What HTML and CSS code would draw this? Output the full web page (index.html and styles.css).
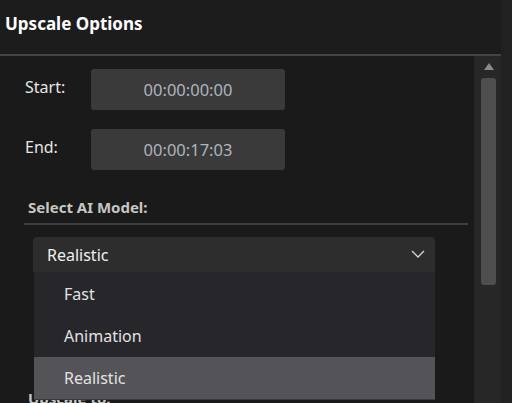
FILE: index.html
```html
<!DOCTYPE html>
<html>
<head>
<meta charset="utf-8">
<link rel="stylesheet" href="styles.css">
</head>
<body>
<div class="app">
  <div class="main">
    <header class="header"><h1 class="title">Upscale Options</h1></header>
    <div class="body">
      <div class="content">
        <div class="row">
          <span class="label">Start:</span>
          <div class="timebox">00:00:00:00</div>
        </div>
        <div class="row">
          <span class="label">End:</span>
          <div class="timebox">00:00:17:03</div>
        </div>
        <div class="section">Select AI Model:</div>
        <div class="select">
          <span>Realistic</span>
          <svg class="chev" width="14" height="8" viewBox="0 0 14 8"><path d="M1 1 L7 7 L13 1" fill="none" stroke="#d8d8d8" stroke-width="1.3"/></svg>
        </div>
        <div class="section next">Upscale to:</div>
        <ul class="popup">
          <li class="opt">Fast</li>
          <li class="opt">Animation</li>
          <li class="opt selected">Realistic</li>
        </ul>
      </div>
      <div class="scrollbar">
        <svg class="arrow" width="10" height="7" viewBox="0 0 10 7"><path d="M5 0 L10 7 L0 7 Z" fill="#8a8a8a"/></svg>
        <div class="thumb"></div>
      </div>
    </div>
  </div>
  <div class="strip"></div>
</div>
</body>
</html>
```

FILE: styles.css
```css
html, body {
  margin: 0;
  padding: 0;
  background: #1a1a1a;
  font-family: "Noto Sans", "Open Sans", sans-serif;
  overflow: hidden;
}
.app {
  display: flex;
  width: 512px;
  height: 403px;
}
.main {
  width: 501px;
  display: flex;
  flex-direction: column;
}
.strip {
  width: 11px;
  background: #212121;
}
.header {
  height: 54px;
  background: #1c1c1c;
  border-bottom: 2px solid #454545;
  box-sizing: content-box;
  display: flex;
  align-items: center;
}
.title {
  margin: 0 0 0 5px;
  font-size: 17px;
  font-weight: 700;
  color: #ffffff;
  position: relative;
  top: -4px;
}
.body {
  flex: 1;
  display: flex;
  min-height: 0;
}
.content {
  flex: 1;
  position: relative;
  padding: 13px 0 0 25px;
  overflow: hidden;
}
.row {
  display: flex;
  align-items: flex-start;
  margin-bottom: 19px;
}
.label {
  width: 66px;
  color: #e6e6e6;
  font-size: 16px;
  padding-top: 7px;
}
.timebox {
  width: 194px;
  height: 41px;
  background: #3a3a3a;
  border-radius: 3px;
  color: #aeb4be;
  font-size: 16.5px;
  display: flex;
  align-items: center;
  justify-content: center;
}
.section {
  margin: 27px 0 0 -1px;
  color: #c6c6c6;
  font-size: 15px;
  font-weight: 700;
  padding-bottom: 6px;
  padding-left: 4px;
  border-bottom: 2px solid #3e3e3e;
  width: 444px;
  box-sizing: border-box;
}
.section.next {
  border-bottom: none;
  margin-top: 116px;
  margin-left: -1px;
}
.select {
  margin: 12px 0 0 8px;
  width: 402px;
  height: 35px;
  background: #2d2d2d;
  border-radius: 4px 4px 0 0;
  display: flex;
  align-items: center;
  justify-content: space-between;
  padding: 0 10px 0 14px;
  box-sizing: border-box;
  color: #f0f0f0;
  font-size: 16px;
}
.chev {
  margin-top: -2px;
}
.popup {
  position: absolute;
  z-index: 2;
  left: 34px;
  top: 216px;
  width: 401px;
  margin: 0;
  padding: 0;
  list-style: none;
  background: #27272b;
  border-bottom: 1px solid #3a3a3e;
}
.opt {
  height: 42px;
  display: flex;
  align-items: center;
  padding-left: 30px;
  color: #e2e2e2;
  font-size: 16px;
}
.opt:first-child {
  height: 43px;
}
.opt.selected {
  background: #545358;
}
.scrollbar {
  width: 27px;
  background: #272727;
  display: flex;
  flex-direction: column;
  align-items: center;
  padding-top: 7px;
  box-sizing: border-box;
}
.arrow {
  margin-left: 2px;
}
.thumb {
  margin-top: 8px;
  width: 15px;
  height: 207px;
  background: #4e4e4e;
  border-radius: 3px;
  margin-left: 1px;
}
```
